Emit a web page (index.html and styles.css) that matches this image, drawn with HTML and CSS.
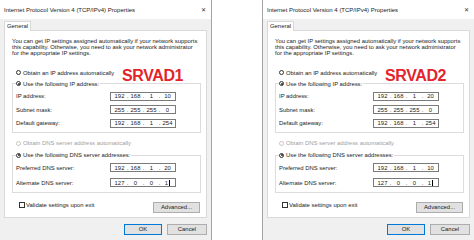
FILE: index.html
```html
<!DOCTYPE html>
<html lang="en">
<head>
    <meta charset="UTF-8">
    <title>TCP/IPv4 Properties</title>
    <link rel="stylesheet" href="styles.css">
</head>
<body>
    <div class="dialog first">
        <div class="titlebar">
            <span>Internet Protocol Version 4 (TCP/IPv4) Properties</span>
            <span class="close">&#x2715;</span>
        </div>
        <div class="tabs"><div class="tab">General</div></div>
        <div class="panel">
            <p class="desc">You can get IP settings assigned automatically if your network supports this capability. Otherwise, you need to ask your network administrator for the appropriate IP settings.</p>
            <div class="option"><span class="radio"></span>Obtain an IP address automatically</div>
            <fieldset>
                <legend><span class="radio checked"></span>Use the following IP address:</legend>
                <div class="field">
                    <span>IP address:</span>
                    <div class="ip"><span>192</span><span>.</span><span>168</span><span>.</span><span>1</span><span>.</span><span>10</span></div>
                </div>
                <div class="field">
                    <span>Subnet mask:</span>
                    <div class="ip"><span>255</span><span>.</span><span>255</span><span>.</span><span>255</span><span>.</span><span>0</span></div>
                </div>
                <div class="field">
                    <span>Default gateway:</span>
                    <div class="ip"><span>192</span><span>.</span><span>168</span><span>.</span><span>1</span><span>.</span><span>254</span></div>
                </div>
            </fieldset>
            <div class="option disabled"><span class="radio"></span>Obtain DNS server address automatically</div>
            <fieldset class="dns">
                <legend><span class="radio checked"></span>Use the following DNS server addresses:</legend>
                <div class="field">
                    <span>Preferred DNS server:</span>
                    <div class="ip"><span>192</span><span>.</span><span>168</span><span>.</span><span>1</span><span>.</span><span>20</span></div>
                </div>
                <div class="field">
                    <span>Alternate DNS server:</span>
                    <div class="ip"><span>127</span><span>.</span><span>0</span><span>.</span><span>0</span><span>.</span><span>1<i class="caret"></i></span></div>
                </div>
            </fieldset>
            <div class="bottom-row">
                <label class="check"><span class="box"></span>Validate settings upon exit</label>
                <button class="btn advanced">Advanced...</button>
            </div>
        </div>
        <div class="footer">
            <button class="btn ok">OK</button>
            <button class="btn">Cancel</button>
        </div>
        <div class="tag">SRVAD1</div>
    </div>

    <div class="dialog">
        <div class="titlebar">
            <span>Internet Protocol Version 4 (TCP/IPv4) Properties</span>
            <span class="close">&#x2715;</span>
        </div>
        <div class="tabs"><div class="tab">General</div></div>
        <div class="panel">
            <p class="desc">You can get IP settings assigned automatically if your network supports this capability. Otherwise, you need to ask your network administrator for the appropriate IP settings.</p>
            <div class="option"><span class="radio"></span>Obtain an IP address automatically</div>
            <fieldset>
                <legend><span class="radio checked"></span>Use the following IP address:</legend>
                <div class="field">
                    <span>IP address:</span>
                    <div class="ip"><span>192</span><span>.</span><span>168</span><span>.</span><span>1</span><span>.</span><span>20</span></div>
                </div>
                <div class="field">
                    <span>Subnet mask:</span>
                    <div class="ip"><span>255</span><span>.</span><span>255</span><span>.</span><span>255</span><span>.</span><span>0</span></div>
                </div>
                <div class="field">
                    <span>Default gateway:</span>
                    <div class="ip"><span>192</span><span>.</span><span>168</span><span>.</span><span>1</span><span>.</span><span>254</span></div>
                </div>
            </fieldset>
            <div class="option disabled"><span class="radio"></span>Obtain DNS server address automatically</div>
            <fieldset class="dns">
                <legend><span class="radio checked"></span>Use the following DNS server addresses:</legend>
                <div class="field">
                    <span>Preferred DNS server:</span>
                    <div class="ip"><span>192</span><span>.</span><span>168</span><span>.</span><span>1</span><span>.</span><span>10</span></div>
                </div>
                <div class="field">
                    <span>Alternate DNS server:</span>
                    <div class="ip"><span>127</span><span>.</span><span>0</span><span>.</span><span>0</span><span>.</span><span>1<i class="caret"></i></span></div>
                </div>
            </fieldset>
            <div class="bottom-row">
                <label class="check"><span class="box"></span>Validate settings upon exit</label>
                <button class="btn advanced">Advanced...</button>
            </div>
        </div>
        <div class="footer">
            <button class="btn ok">OK</button>
            <button class="btn">Cancel</button>
        </div>
        <div class="tag">SRVAD2</div>
    </div>
</body>
</html>
```

FILE: styles.css
```css
html, body {
    margin: 0;
    overflow: hidden;
    background: #fff;
}
body {
    width: 474px;
    height: 240px;
    display: flex;
    gap: 50px;
    font-family: "Liberation Sans", Arial, sans-serif;
    font-size: 5.9px;
    color: #1a1a1a;
}
.dialog {
    position: relative;
    flex: none;
    box-sizing: border-box;
    width: 213px;
    height: 240px;
    border: 1px solid #a3a3a3;
    border-top: none;
    border-bottom: none;
    background: #f0f0f0;
}
.dialog.first {
    margin-left: -1px;
}
.titlebar {
    height: 19px;
    display: flex;
    align-items: center;
    justify-content: space-between;
    padding: 0 5px 0 4px;
    background: #fff;
    font-size: 6px;
}
.close {
    font-size: 6px;
    color: #333;
}
.tabs {
    padding: 2px 4px 0;
    height: 9px;
}
.tab {
    position: relative;
    z-index: 1;
    box-sizing: border-box;
    width: 27px;
    height: 10px;
    line-height: 9px;
    text-align: center;
    background: #fff;
    border: 1px solid #d9d9d9;
    border-bottom: none;
}
.panel {
    margin: 0 4px;
    padding: 8px 5px 4px 7px;
    background: #fff;
    border: 1px solid #d9d9d9;
}
.desc {
    margin: 0;
    line-height: 5.8px;
}
.option {
    display: flex;
    align-items: center;
    gap: 2px;
    height: 8px;
    margin-top: 12.5px;
    padding-left: 4px;
}
.option.disabled {
    margin-top: 6px;
    color: #a0a0a0;
}
.option.disabled .radio {
    border-color: #c5c5c5;
}
.radio {
    box-sizing: border-box;
    width: 5px;
    height: 5px;
    border: 1px solid #333;
    border-radius: 50%;
    background: #fff;
    display: flex;
    align-items: center;
    justify-content: center;
}
.radio.checked::after {
    content: "";
    width: 2px;
    height: 2px;
    border-radius: 50%;
    background: #222;
}
fieldset {
    margin: 3px 0 0;
    padding: 0 3px 4.5px;
    border: 1px solid #dcdcdc;
    min-width: 0;
}
fieldset.dns {
    margin-top: 4px;
}
legend {
    display: flex;
    align-items: center;
    gap: 2px;
    height: 8px;
    padding: 0 1px 0 0;
}
.field {
    display: grid;
    grid-template-columns: 94px 66px;
    align-items: center;
    height: 9px;
    margin-top: 4.5px;
}
legend + .field {
    margin-top: 4px;
}
.dns .field + .field {
    margin-top: 6px;
}
.ip {
    box-sizing: border-box;
    height: 9px;
    display: grid;
    grid-template-columns: 13px 3px 13px 3px 13px 3px 13px;
    align-items: center;
    padding-left: 2px;
    border: 1px solid #7a7a7a;
    background: #fff;
    text-align: center;
}
.caret {
    display: inline-block;
    width: 0;
    height: 6px;
    margin-left: 1px;
    vertical-align: -1px;
    border-left: 1px solid #000;
}
.bottom-row {
    display: flex;
    justify-content: space-between;
    align-items: flex-start;
    margin-top: 9px;
}
.check {
    display: flex;
    align-items: center;
    gap: 1px;
    height: 6px;
    padding-left: 7px;
}
.box {
    box-sizing: border-box;
    width: 6px;
    height: 6px;
    border: 1px solid #333;
    background: #fff;
}
.btn {
    box-sizing: border-box;
    height: 11px;
    padding: 0;
    font-family: inherit;
    font-size: 5.9px;
    color: #1a1a1a;
    background: #e1e1e1;
    border: 1px solid #adadad;
    border-radius: 0;
}
.advanced {
    width: 47px;
    margin-right: 1px;
}
.footer {
    display: flex;
    justify-content: flex-end;
    gap: 5px;
    padding: 6px 4px 0;
}
.footer .btn {
    width: 40px;
}
.footer .ok {
    width: 38px;
    border-color: #0078d7;
}
.tag {
    position: absolute;
    left: 122px;
    top: 67px;
    font-size: 16px;
    font-weight: bold;
    letter-spacing: -0.4px;
    color: #e3242b;
}
```
